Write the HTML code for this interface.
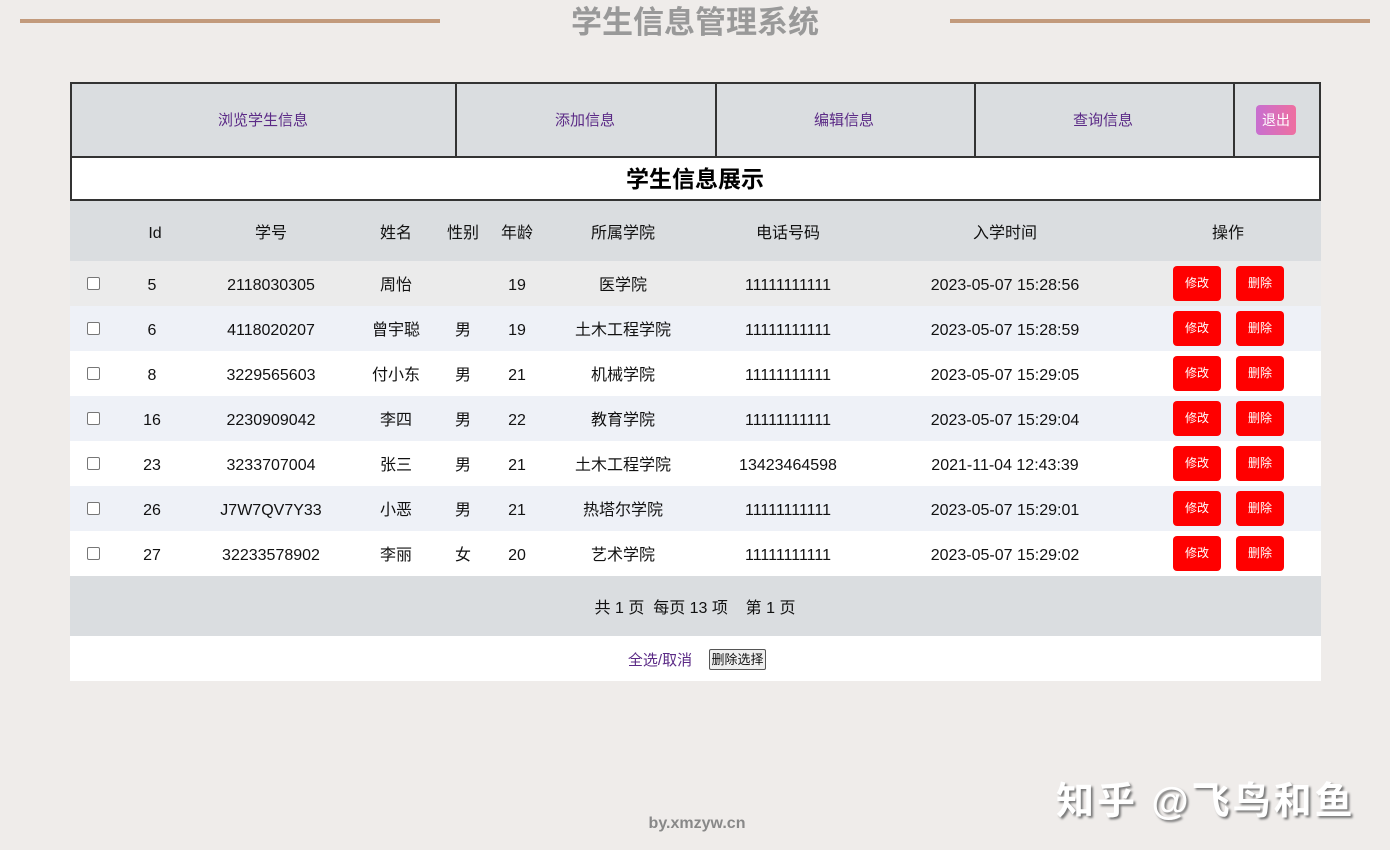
<!DOCTYPE html>
<html><head><meta charset="utf-8"><style>
*{margin:0;padding:0;box-sizing:border-box}
body{width:1390px;height:850px;background:#efecea;font-family:"Liberation Sans","Noto Sans CJK SC",sans-serif;position:relative;overflow:hidden;color:#111}
.a{position:absolute}
.c{position:absolute;transform:translateX(-50%);white-space:nowrap}
.line{position:absolute;top:19px;height:4px;background:#c29a7c;width:420px}
.nav{position:absolute;left:70px;top:82px;width:1251px;height:119px;border:2px solid #333;background:#dadde0}
.nav .v{position:absolute;top:0;height:72px;width:2px;background:#333}
.nav .t{position:absolute;top:1px;line-height:72px;font-size:15px;color:#5b2a86;transform:translateX(-50%)}
.row{position:absolute;left:70px;width:1251px;height:45px;font-size:16px;line-height:45px}
.row span{position:absolute;top:2px;transform:translateX(-50%);white-space:nowrap;line-height:45px}
.row i{position:absolute;left:17px;top:16px;width:13px;height:13px;border:1px solid #767676;border-radius:2px;background:#fff}
.row b{position:absolute;top:5px;width:48px;height:35px;background:#f00;border-radius:4px;color:#fff;font-size:12px;font-weight:normal;text-align:center;line-height:35px}
.h span{line-height:62px}
</style></head><body>
<div class="line" style="left:20px"></div>
<div class="line" style="left:950px"></div>
<div class="c" style="left:695px;top:1px;font-size:31px;font-weight:bold;color:#999;line-height:44px">学生信息管理系统</div>
<div class="nav">
<div class="v" style="left:383px"></div><div class="v" style="left:643px"></div><div class="v" style="left:902px"></div><div class="v" style="left:1161px"></div>
<div class="t" style="left:191px">浏览学生信息</div>
<div class="t" style="left:513px">添加信息</div>
<div class="t" style="left:772px">编辑信息</div>
<div class="t" style="left:1031px">查询信息</div>
<div class="a" style="left:1184px;top:21px;width:40px;height:30px;border-radius:4px;background:linear-gradient(90deg,#c86fd0,#ee6fa0);color:#fff;font-size:14px;text-align:center;line-height:30px">退出</div>
<div class="a" style="left:0;top:72px;width:1247px;height:43px;background:#fff;border-top:2px solid #333"></div>
<div class="c" style="left:623px;top:74px;line-height:43px;font-size:23px;font-weight:bold;color:#000">学生信息展示</div>
</div>
<div class="row h" style="top:201px;height:60px;background:#dadde0"><span style="left:85px">Id</span><span style="left:201px">学号</span><span style="left:326px">姓名</span><span style="left:393px">性别</span><span style="left:447px">年龄</span><span style="left:553px">所属学院</span><span style="left:718px">电话号码</span><span style="left:935px">入学时间</span><span style="left:1158px">操作</span></div>
<div class="row" style="top:261px;background:#ebebeb"><i></i><span style="left:82px">5</span><span style="left:201px">2118030305</span><span style="left:326px">周怡</span><span style="left:393px"></span><span style="left:447px">19</span><span style="left:553px">医学院</span><span style="left:718px">11111111111</span><span style="left:935px">2023-05-07 15:28:56</span><b style="left:1103px">修改</b><b style="left:1166px">删除</b></div>
<div class="row" style="top:306px;background:#eef1f7"><i></i><span style="left:82px">6</span><span style="left:201px">4118020207</span><span style="left:326px">曾宇聪</span><span style="left:393px">男</span><span style="left:447px">19</span><span style="left:553px">土木工程学院</span><span style="left:718px">11111111111</span><span style="left:935px">2023-05-07 15:28:59</span><b style="left:1103px">修改</b><b style="left:1166px">删除</b></div>
<div class="row" style="top:351px;background:#fff"><i></i><span style="left:82px">8</span><span style="left:201px">3229565603</span><span style="left:326px">付小东</span><span style="left:393px">男</span><span style="left:447px">21</span><span style="left:553px">机械学院</span><span style="left:718px">11111111111</span><span style="left:935px">2023-05-07 15:29:05</span><b style="left:1103px">修改</b><b style="left:1166px">删除</b></div>
<div class="row" style="top:396px;background:#eef1f7"><i></i><span style="left:82px">16</span><span style="left:201px">2230909042</span><span style="left:326px">李四</span><span style="left:393px">男</span><span style="left:447px">22</span><span style="left:553px">教育学院</span><span style="left:718px">11111111111</span><span style="left:935px">2023-05-07 15:29:04</span><b style="left:1103px">修改</b><b style="left:1166px">删除</b></div>
<div class="row" style="top:441px;background:#fff"><i></i><span style="left:82px">23</span><span style="left:201px">3233707004</span><span style="left:326px">张三</span><span style="left:393px">男</span><span style="left:447px">21</span><span style="left:553px">土木工程学院</span><span style="left:718px">13423464598</span><span style="left:935px">2021-11-04 12:43:39</span><b style="left:1103px">修改</b><b style="left:1166px">删除</b></div>
<div class="row" style="top:486px;background:#eef1f7"><i></i><span style="left:82px">26</span><span style="left:201px">J7W7QV7Y33</span><span style="left:326px">小恶</span><span style="left:393px">男</span><span style="left:447px">21</span><span style="left:553px">热塔尔学院</span><span style="left:718px">11111111111</span><span style="left:935px">2023-05-07 15:29:01</span><b style="left:1103px">修改</b><b style="left:1166px">删除</b></div>
<div class="row" style="top:531px;background:#fff"><i></i><span style="left:82px">27</span><span style="left:201px">32233578902</span><span style="left:326px">李丽</span><span style="left:393px">女</span><span style="left:447px">20</span><span style="left:553px">艺术学院</span><span style="left:718px">11111111111</span><span style="left:935px">2023-05-07 15:29:02</span><b style="left:1103px">修改</b><b style="left:1166px">删除</b></div>
<div class="row h" style="top:576px;height:60px;background:#dadde0"><span style="left:625px;font-size:16px">共 1 页&nbsp; 每页 13 项&nbsp;&nbsp;&nbsp; 第 1 页</span></div>
<div class="row" style="top:636px;background:#fff">
<span style="left:590px;font-size:15px;color:#5b2a86">全选/取消</span>
<div class="a" style="left:639px;top:13px;width:57px;height:21px;border:1px solid #555;border-radius:2px;background:#efefef;font-size:13px;line-height:19px;text-align:center">删除选择</div>
</div>
<div class="a" style="left:1056px;top:770px;font-size:38px;font-weight:bold;color:#fff;text-shadow:2px 2px 2px #777;letter-spacing:3px">知乎 @飞鸟和鱼</div>
<div class="c" style="left:697px;top:815px;font-size:16px;font-weight:bold;color:#888">by.xmzyw.cn</div>
</body></html>
